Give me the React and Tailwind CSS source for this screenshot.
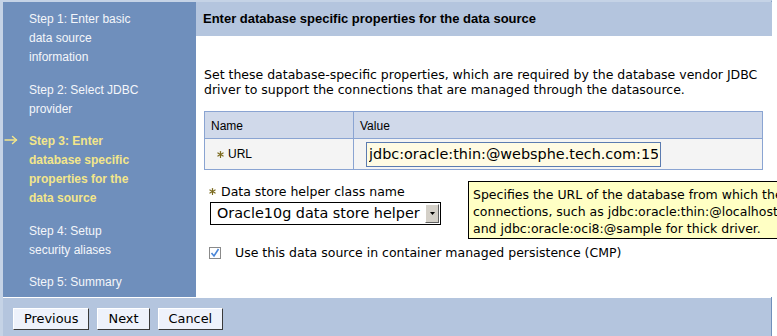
import React from "react";

const sans = { fontFamily: '"Liberation Sans", Arial, sans-serif' };
const dv = { fontFamily: '"DejaVu Sans", Verdana, sans-serif' };

function Star() {
  return (
    <svg width="7" height="7" viewBox="0 0 7 7" className="shrink-0">
      <g stroke="#7b6a1f" strokeWidth="1.2" strokeLinecap="round">
        <line x1="3.5" y1="0.6" x2="3.5" y2="6.4" />
        <line x1="0.9" y1="2" x2="6.1" y2="5" />
        <line x1="0.9" y1="5" x2="6.1" y2="2" />
      </g>
    </svg>
  );
}

function Arrow() {
  return (
    <svg width="14" height="10" viewBox="0 0 14 10">
      <g stroke="#f3e68a" strokeWidth="1.4" fill="none" strokeLinecap="round" strokeLinejoin="round">
        <line x1="1" y1="5" x2="12.5" y2="5" />
        <polyline points="8.5,1.5 12.5,5 8.5,8.5" />
      </g>
    </svg>
  );
}

function Step({ lines, active }) {
  return (
    <div className="flex">
      <div className="w-[26px] shrink-0 flex justify-start pl-[1px]">
        {active ? <div className="mt-[3px]"><Arrow /></div> : null}
      </div>
      <div
        className={
          "w-[118px] text-[12px] leading-[19px] " +
          (active ? "font-bold text-[#f3e68a]" : "text-[#f4f6fa]")
        }
        style={sans}
      >
        {lines.map((l, i) => (
          <div key={i} className="whitespace-nowrap">{l}</div>
        ))}
      </div>
    </div>
  );
}

function Btn({ children }) {
  return (
    <button
      className="h-[22px] px-[10px] bg-[#eef2fb] border border-t-white border-l-white border-r-[#3a3a3a] border-b-[#3a3a3a] text-[12.9px] leading-[18px] text-black"
      style={dv}
    >
      {children}
    </button>
  );
}

export default function App() {
  return (
    <div className="relative w-[777px] h-[336px] bg-white overflow-hidden">
      <div className="w-[772px] h-[336px] flex flex-col border-l-[3px] border-t-[2px] border-r border-l-[#c5d3e6] border-t-[#c5d3e6] border-r-[#7090bc]">
        <div className="flex flex-1 min-h-0">
          {/* Sidebar */}
          <div className="w-[193px] shrink-0 bg-[#6f8fbc] pt-[8px] flex flex-col gap-[13.5px]">
            <Step lines={["Step 1: Enter basic", "data source", "information"]} />
            <Step lines={["Step 2: Select JDBC", "provider"]} />
            <Step
              active
              lines={["Step 3: Enter", "database specific", "properties for the", "data source"]}
            />
            <Step lines={["Step 4: Setup", "security aliases"]} />
            <Step lines={["Step 5: Summary"]} />
          </div>
          {/* Main */}
          <div className="flex-1 flex flex-col bg-white">
            <div
              className="h-[34px] bg-[#b4c5de] flex items-center px-[7px] text-[13px] font-bold text-black"
              style={sans}
            >
              Enter database specific properties for the data source
            </div>
            <div className="px-[8px] pt-[31px]">
              <p className="text-[12.5px] leading-[15px] text-black w-[560px]" style={dv}>
                Set these database-specific properties, which are required by the database vendor JDBC
                driver to support the connections that are managed through the datasource.
              </p>
              <div className="mt-[14px] w-[559px] border border-[#8aa4d2]">
                <div className="flex h-[27px] bg-[#d0d9ea] border-b border-[#8aa4d2] text-[12px] text-black" style={sans}>
                  <div className="w-[149px] border-r border-[#8aa4d2] flex items-center pl-[6px] pt-[2px]">Name</div>
                  <div className="flex-1 flex items-center pl-[6px] pt-[2px]">Value</div>
                </div>
                <div className="flex h-[30px] bg-[#f4f4f4]">
                  <div className="w-[149px] border-r border-[#8aa4d2] flex items-center pl-[12px] gap-[4px] text-[12px] text-black" style={sans}>
                    <Star />
                    <span>URL</span>
                  </div>
                  <div className="flex-1 flex items-center pl-[12px]">
                    <input
                      readOnly
                      value="jdbc:oracle:thin:@websphe.tech.com:1521:ORCL"
                      className="w-[295px] h-[25px] bg-[#fffbe3] border border-[#5b7bb0] px-[2px] text-[14.4px] text-black outline-none"
                      style={dv}
                    />
                  </div>
                </div>
              </div>
              <div className="mt-[14px] ml-[5px] flex items-center gap-[5px] text-[12.5px] leading-[15px] text-black" style={dv}>
                <Star />
                <span>Data store helper class name</span>
              </div>
              <div className="ml-[6px] mt-[3px] w-[231px] h-[23px] border border-black flex items-center justify-between bg-white">
                <span className="pl-[6px] text-[14.4px] text-black whitespace-nowrap" style={dv}>
                  Oracle10g data store helper
                </span>
                <div className="w-[14px] h-[19px] mr-[1px] bg-[#d4d0c8] border border-t-white border-l-white border-r-[#606060] border-b-[#606060] flex items-center justify-center">
                  <svg width="5" height="3" viewBox="0 0 5 3">
                    <polygon points="0,0 5,0 2.5,3" fill="#000" />
                  </svg>
                </div>
              </div>
              <div className="mt-[20px] ml-[5px] flex items-center gap-[14px]">
                <div className="w-[12px] h-[12px] border border-[#8a8a8a] bg-white flex items-center justify-center">
                  <svg width="10" height="10" viewBox="0 0 10 10">
                    <polyline points="1.5,5 4,8 8.5,1" fill="none" stroke="#4a86d8" strokeWidth="1.6" />
                  </svg>
                </div>
                <span className="text-[12.5px] leading-[15px] text-black whitespace-nowrap" style={dv}>
                  Use this data source in container managed persistence (CMP)
                </span>
              </div>
            </div>
          </div>
        </div>
        {/* Footer */}
        <div className="h-[39px] shrink-0 bg-[#b4c5de] border-t border-white flex items-start pt-[10px] pl-[10px] gap-[8px]">
          <Btn>Previous</Btn>
          <Btn>Next</Btn>
          <Btn>Cancel</Btn>
        </div>
      </div>
      {/* Tooltip */}
      <div
        className="absolute left-[468px] top-[181px] w-[330px] h-[58px] bg-[#ffffc4] border border-black pl-[4px] pt-[4px] text-[12.5px] leading-[17px] text-black whitespace-nowrap"
        style={dv}
      >
        <div>Specifies the URL of the database from which the data source obtains</div>
        <div>connections, such as jdbc:oracle:thin:@localhost:1521:sample for thin driver</div>
        <div>and jdbc:oracle:oci8:@sample for thick driver.</div>
      </div>
    </div>
  );
}
